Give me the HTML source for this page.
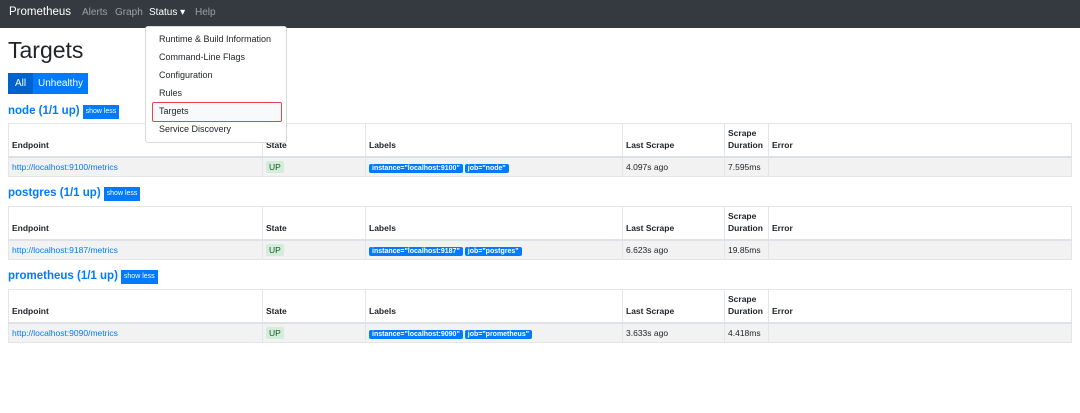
<!DOCTYPE html>
<html><head><meta charset="utf-8"><style>
*{box-sizing:border-box;margin:0;padding:0}
body{width:1080px;height:413px;background:#fff;font-family:"Liberation Sans",Arial,sans-serif;color:#212529;position:relative;overflow:hidden}
.nav{position:absolute;left:0;top:0;width:1080px;height:28px;background:#343a40}
.nav span{position:absolute;top:7px;font-size:10px;color:rgba(255,255,255,.5)}
h1{position:absolute;left:8px;top:37px;font-size:23px;font-weight:500;color:#212529}
.btn{position:absolute;top:73px;height:21px;background:#007bff;color:#fff;font-size:10px;line-height:21px;text-align:center}
.gh{position:absolute;left:8px;font-size:11.5px;font-weight:bold;color:#007bff}
.sl{display:inline-block;background:#007bff;color:#fff;font-size:7px;font-weight:normal;padding:0 3px;height:14px;line-height:14px;vertical-align:1px;margin-left:3px}
table{position:absolute;left:8px;width:1064px;border-collapse:collapse;font-size:8.5px;table-layout:fixed}
td,th{border:1px solid #e3e6e9;padding:0 3px;text-align:left;vertical-align:bottom}
th{height:33px;font-weight:bold;padding-bottom:5px;border-bottom:2px solid #dee2e6;line-height:12px}
td{height:20px;background:#f2f2f2;vertical-align:middle}
a{color:#007bff;text-decoration:none}
.up{background:#d4edda;color:#155724;padding:1px 3px;border-radius:2px;font-size:8.5px}
.lb{background:#007bff;color:#fff;font-size:7px;font-weight:bold;padding:1px 3px;border-radius:2px;margin-right:2px}
.dd{position:absolute;left:145px;top:26px;width:142px;height:117px;background:#fff;border:1px solid rgba(0,0,0,.15);border-radius:3px;font-size:9px}
.dd div{position:absolute;left:13px}
</style></head><body>
<div class="nav">
<span style="left:9px;top:6px;color:#fff;font-size:11.5px">Prometheus</span>
<span style="left:82px">Alerts</span>
<span style="left:115px">Graph</span>
<span style="left:149px;color:#fff">Status ▾</span>
<span style="left:195px">Help</span>
</div>
<h1>Targets</h1>
<div class="btn" style="left:8px;width:25px;background:#0062cc">All</div>
<div class="btn" style="left:33px;width:55px">Unhealthy</div>

<div class="gh" style="top:105px">node (1/1 up)<span class="sl">show less</span></div>
<table style="top:123px"><colgroup><col style="width:254px"><col style="width:103px"><col style="width:257px"><col style="width:102px"><col style="width:44px"><col></colgroup>
<tr><th>Endpoint</th><th>State</th><th>Labels</th><th>Last Scrape</th><th>Scrape Duration</th><th>Error</th></tr>
<tr><td><a>http://localhost:9100/metrics</a></td><td><span class="up">UP</span></td><td><span class="lb">instance="localhost:9100"</span><span class="lb">job="node"</span></td><td>4.097s ago</td><td>7.595ms</td><td></td></tr></table>

<div class="gh" style="top:187px">postgres (1/1 up)<span class="sl">show less</span></div>
<table style="top:206px"><colgroup><col style="width:254px"><col style="width:103px"><col style="width:257px"><col style="width:102px"><col style="width:44px"><col></colgroup>
<tr><th>Endpoint</th><th>State</th><th>Labels</th><th>Last Scrape</th><th>Scrape Duration</th><th>Error</th></tr>
<tr><td><a>http://localhost:9187/metrics</a></td><td><span class="up">UP</span></td><td><span class="lb">instance="localhost:9187"</span><span class="lb">job="postgres"</span></td><td>6.623s ago</td><td>19.85ms</td><td></td></tr></table>

<div class="gh" style="top:270px">prometheus (1/1 up)<span class="sl">show less</span></div>
<table style="top:289px"><colgroup><col style="width:254px"><col style="width:103px"><col style="width:257px"><col style="width:102px"><col style="width:44px"><col></colgroup>
<tr><th>Endpoint</th><th>State</th><th>Labels</th><th>Last Scrape</th><th>Scrape Duration</th><th>Error</th></tr>
<tr><td><a>http://localhost:9090/metrics</a></td><td><span class="up">UP</span></td><td><span class="lb">instance="localhost:9090"</span><span class="lb">job="prometheus"</span></td><td>3.633s ago</td><td>4.418ms</td><td></td></tr></table>

<div class="dd">
<div style="top:7px">Runtime &amp; Build Information</div>
<div style="top:25px">Command-Line Flags</div>
<div style="top:43px">Configuration</div>
<div style="top:61px">Rules</div>
<div style="left:6px;top:75px;width:130px;height:20px;border:1.5px solid #e5454f;border-radius:2px;background:#f8f9fa"></div>
<div style="top:79px">Targets</div>
<div style="top:97px">Service Discovery</div>
</div>
</body></html>
